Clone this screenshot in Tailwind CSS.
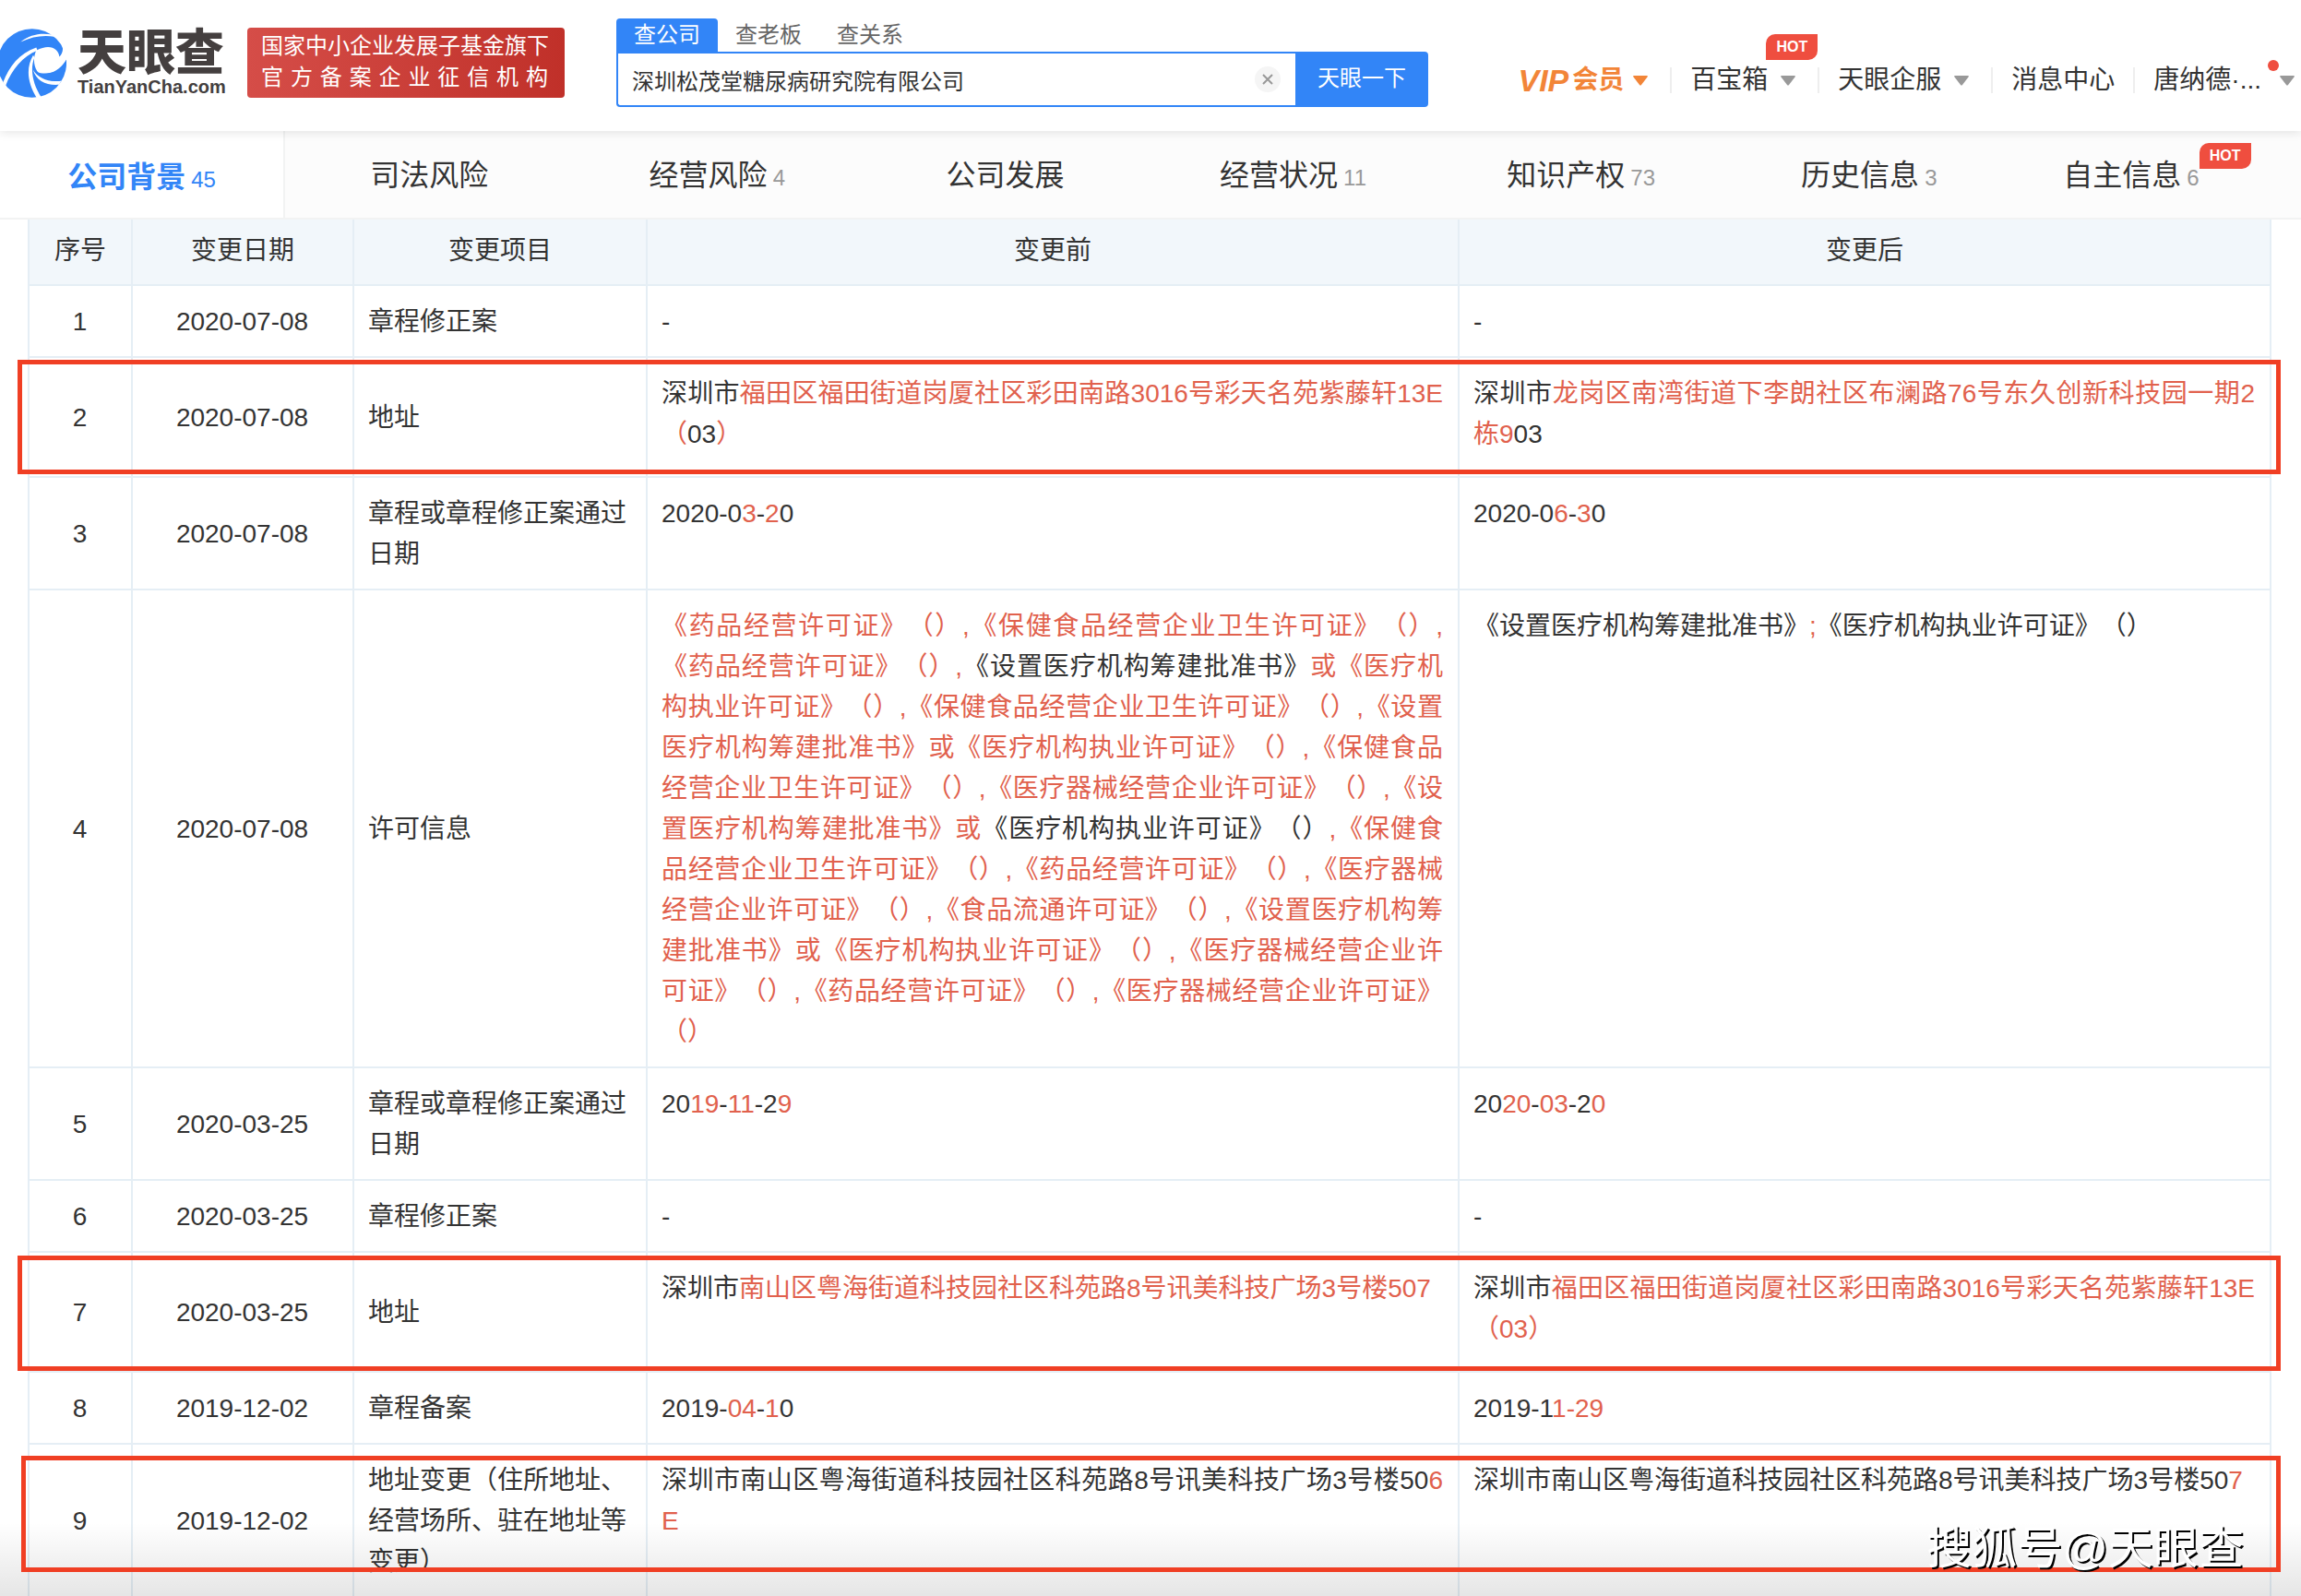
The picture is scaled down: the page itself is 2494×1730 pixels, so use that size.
<!DOCTYPE html>
<html lang="zh-CN">
<head>
<meta charset="utf-8">
<meta name="viewport" content="width=device-width, initial-scale=1">
<title>天眼查 - 变更记录</title>
<script src="https://cdn.jsdelivr.net/npm/@tailwindcss/browser@4"></script>
</head>
<body class="relative flex h-screen flex-col overflow-hidden bg-white font-['Liberation_Sans','Noto_Sans_CJK_SC',sans-serif] text-[28px] leading-[44px] text-[#333] [text-spacing-trim:space-all]">

<header class="relative z-20 flex shrink-0 items-center bg-white pt-5 pb-[26px] whitespace-nowrap shadow-[0_2px_10px_rgba(0,0,0,0.1)]">
  <a href="#" class="flex items-center gap-3" aria-label="天眼查">
    <svg class="h-[75px] w-[72px]" viewBox="0 32 216 224" aria-hidden="true">
      <circle cx="104" cy="144" r="112" fill="#3285f7"/>
      <g fill="#fff">
        <path d="M67 75C98 51 130 45 170 51L176 58C140 52 105 58 67 75Z"/>
        <path d="M118 103C160 80 190 95 193 123C205 112 207 95 200 80L228 90L217 130C205 150 185 175 150 177C135 177 125 176 121 170C108 152 108 122 118 103Z"/>
        <path d="M107 165C125 195 160 207 200 201L192 214C150 217 118 202 107 165Z"/>
        <path d="M10 206C30 155 62 112 118 93L122 103C75 120 38 165 18 218Z"/>
        <path d="M112 125C96 165 108 215 134 254L121 260C88 205 84 160 108 118Z"/>
      </g>
      <path d="M126 177C165 185 205 165 217 130C217 160 208 185 196 202C165 205 142 195 126 177Z" fill="#3285f7"/>
    </svg>
    <span class="flex w-40 flex-col text-[#443f3f]">
      <span class="text-[53px] leading-[52px] font-black">天眼查</span>
      <span class="text-[20px] leading-5 font-bold">TianYanCha.com</span>
    </span>
  </a>
  <p class="ml-6 w-[344px] rounded-sm bg-linear-to-r from-[#d54d48] to-[#c03029] pt-[3px] pr-[18px] pb-[5px] pl-[15px] text-justify text-[24px] leading-[34px] text-white [text-align-last:justify]">国家中小企业发展子基金旗下<br>官方备案企业征信机构</p>

  <form class="ml-14 w-[880px]" onsubmit="return false">
    <div class="flex text-center text-[24px] leading-9 text-[#666]">
      <button type="button" class="w-[110px] rounded-t-sm bg-[#3285f7] text-white">查公司</button>
      <button type="button" class="w-[110px]">查老板</button>
      <button type="button" class="w-[110px]">查关系</button>
    </div>
    <div class="flex h-[60px]">
      <div class="flex flex-1 items-center rounded-bl-sm border-2 border-r-0 border-[#3285f7] pr-4 pl-[15px]">
        <input type="text" aria-label="公司名称" value="深圳松茂堂糖尿病研究院有限公司" class="h-full min-w-0 flex-1 text-[24px] outline-none">
        <button type="button" aria-label="清除" class="flex size-7 items-center justify-center rounded-full bg-[#f5f5f5]">
          <svg class="size-3" viewBox="0 0 12 12" fill="none" stroke="#999" stroke-width="2" aria-hidden="true"><path d="M1 1L11 11M11 1L1 11"/></svg>
        </button>
      </div>
      <button type="submit" class="w-36 rounded-r-sm bg-[#3285f7] pb-0.5 text-[24px] text-white">天眼一下</button>
    </div>
  </form>

  <nav class="ml-auto flex h-[60px] items-center self-end pt-0.5 pr-[7px]" aria-label="用户菜单">
    <a href="#" class="flex items-center border-r-2 border-[#eee] pr-6 leading-7 font-bold text-[#f28538]">
      <span class="mr-1 text-[34px] italic">VIP</span>会员
      <svg class="ml-2.5 h-[11px] w-4" viewBox="0 0 16 11" fill="currentColor" aria-hidden="true"><path d="M1 0H15Q16.500 0 15.500 1.500L9 10Q8 11 7 10L.5 1.500Q-.5 0 1 0Z"/></svg>
    </a>
    <a href="#" class="relative flex items-center border-r-2 border-[#eee] pr-6 pl-5 leading-7">百宝箱
      <svg class="ml-3.5 h-[11px] w-4 text-[#999]" viewBox="0 0 16 11" fill="currentColor" aria-hidden="true"><path d="M1 0H15Q16.500 0 15.500 1.500L9 10Q8 11 7 10L.5 1.500Q-.5 0 1 0Z"/></svg>
      <span class="absolute right-0 bottom-full mb-2 h-7 w-14 rounded-tl-[10px] rounded-br-[10px] bg-[#ef4e3f] text-center text-base leading-7 font-bold text-white">HOT</span>
    </a>
    <a href="#" class="flex items-center border-r-2 border-[#eee] pr-6 pl-5 leading-7">天眼企服
      <svg class="ml-3.5 h-[11px] w-4 text-[#999]" viewBox="0 0 16 11" fill="currentColor" aria-hidden="true"><path d="M1 0H15Q16.500 0 15.500 1.500L9 10Q8 11 7 10L.5 1.500Q-.5 0 1 0Z"/></svg>
    </a>
    <a href="#" class="border-r-2 border-[#eee] px-5 leading-7">消息中心</a>
    <a href="#" class="relative flex items-center pl-5 leading-7">唐纳德·...
      <svg class="ml-5 h-[11px] w-4 text-[#999]" viewBox="0 0 16 11" fill="currentColor" aria-hidden="true"><path d="M1 0H15Q16.500 0 15.500 1.500L9 10Q8 11 7 10L.5 1.500Q-.5 0 1 0Z"/></svg>
      <span class="absolute -top-2 right-[17px] size-3 rounded-full bg-[#ef4e3f]"></span>
    </a>
  </nav>
</header>

<nav class="relative z-10 grid shrink-0 grid-cols-[309fr_repeat(7,312fr)] border-b-2 border-[#f2f3f3] bg-[#fcfcfc] text-[32px] whitespace-nowrap" aria-label="公司信息">
  <a href="#" class="flex h-[94px] items-baseline justify-center gap-1.5 border-r-2 border-[#f2f3f3] bg-white pt-7 font-bold text-[#3285f7]">公司背景<span class="text-[24px] font-normal">45</span></a>
  <a href="#" class="flex items-baseline justify-center gap-1.5 pt-[26px]">司法风险</a>
  <a href="#" class="flex items-baseline justify-center gap-1.5 pt-[26px]">经营风险<span class="text-[24px] text-[#999]">4</span></a>
  <a href="#" class="flex items-baseline justify-center gap-1.5 pt-[26px]">公司发展</a>
  <a href="#" class="flex items-baseline justify-center gap-1.5 pt-[26px]">经营状况<span class="text-[24px] text-[#999]">11</span></a>
  <a href="#" class="flex items-baseline justify-center gap-1.5 pt-[26px]">知识产权<span class="text-[24px] text-[#999]">73</span></a>
  <a href="#" class="flex items-baseline justify-center gap-1.5 pt-[26px]">历史信息<span class="text-[24px] text-[#999]">3</span></a>
  <a href="#" class="flex items-baseline justify-center gap-1.5 pt-[26px] pr-14">自主信息<span class="relative text-[24px] text-[#999]">6<span class="absolute bottom-full left-full -mb-3 h-7 w-14 rounded-tl-[10px] rounded-br-[10px] bg-[#ef4e3f] text-center text-base leading-7 font-bold text-white">HOT</span></span></a>
</nav>

<main class="min-h-0 flex-1 overflow-x-hidden overflow-y-auto pr-8 pl-[30px] [scrollbar-width:none]">
  <table class="w-full table-fixed border-collapse [&_em]:text-[#e1614d] [&_em]:not-italic [&_td]:border-2 [&_td]:border-[#e5eef5] [&_td]:pt-[17px] [&_td]:pr-4 [&_td]:pb-[15px] [&_td]:pl-[15px] [&_th]:border-2 [&_th]:border-t-0 [&_th]:border-[#e5eef5] [&_th]:bg-[#f2f7fb] [&_th]:pt-3 [&_th]:pb-3.5 [&_th]:font-normal">
    <colgroup><col class="w-[112px]"><col class="w-[240px]"><col class="w-[318px]"><col><col></colgroup>
    <thead>
      <tr><th scope="col">序号</th><th scope="col">变更日期</th><th scope="col">变更项目</th><th scope="col">变更前</th><th scope="col">变更后</th></tr>
    </thead>
    <tbody>
      <tr>
        <td class="text-center">1</td><td class="text-center">2020-07-08</td><td>章程修正案</td>
        <td class="align-top">-</td><td class="align-top">-</td>
      </tr>
      <tr class="relative h-[130px]">
        <td class="text-center">2<span class="pointer-events-none absolute top-[3px] -right-[11px] bottom-[3px] -left-3 z-10 border-5 border-[#f03f24]"></span></td><td class="text-center">2020-07-08</td><td>地址</td>
        <td class="text-justify align-top">深圳市<em>福田区福田街道岗厦社区彩田南路3016号彩天名苑紫藤轩13E（</em>03<em>）</em></td>
        <td class="text-justify align-top">深圳市<em>龙岗区南湾街道下李朗社区布澜路76号东久创新科技园一期2栋9</em>03</td>
      </tr>
      <tr>
        <td class="text-center">3</td><td class="text-center">2020-07-08</td><td>章程或章程修正案通过日期</td>
        <td class="align-top">2020-0<em>3</em>-<em>2</em>0</td><td class="align-top">2020-0<em>6</em>-<em>3</em>0</td>
      </tr>
      <tr>
        <td class="text-center">4</td><td class="text-center">2020-07-08</td><td>许可信息</td>
        <td class="text-justify align-top"><em>《药品经营许可证》（）,《保健食品经营企业卫生许可证》（）,《药品经营许可证》（）,</em>《设置医疗机构筹建批准书》<em>或《医疗机构执业许可证》（）,《保健食品经营企业卫生许可证》（）,《设置医疗机构筹建批准书》或《医疗机构执业许可证》（）,《保健食品经营企业卫生许可证》（）,《医疗器械经营企业许可证》（）,《设置医疗机构筹建批准书》或</em>《医疗机构执业许可证》（）<em>,《保健食品经营企业卫生许可证》（）,《药品经营许可证》（）,《医疗器械经营企业许可证》（）,《食品流通许可证》（）,《设置医疗机构筹建批准书》或《医疗机构执业许可证》（）,《医疗器械经营企业许可证》（）,《药品经营许可证》（）,《医疗器械经营企业许可证》（）</em></td>
        <td class="align-top">《设置医疗机构筹建批准书》<em>;</em>《医疗机构执业许可证》（）</td>
      </tr>
      <tr>
        <td class="text-center">5</td><td class="text-center">2020-03-25</td><td>章程或章程修正案通过日期</td>
        <td class="align-top">20<em>19</em>-<em>11</em>-2<em>9</em></td><td class="align-top">20<em>20</em>-<em>03</em>-2<em>0</em></td>
      </tr>
      <tr>
        <td class="text-center">6</td><td class="text-center">2020-03-25</td><td>章程修正案</td>
        <td class="align-top">-</td><td class="align-top">-</td>
      </tr>
      <tr class="relative h-[130px]">
        <td class="text-center">7<span class="pointer-events-none absolute top-1 -right-[11px] bottom-px -left-3 z-10 border-5 border-[#f03f24]"></span></td><td class="text-center">2020-03-25</td><td>地址</td>
        <td class="text-justify align-top">深圳市<em>南山区粤海街道科技园社区科苑路8号讯美科技广场3号楼507</em></td>
        <td class="text-justify align-top">深圳市<em>福田区福田街道岗厦社区彩田南路3016号彩天名苑紫藤轩13E（03）</em></td>
      </tr>
      <tr>
        <td class="text-center">8</td><td class="text-center">2019-12-02</td><td>章程备案</td>
        <td class="align-top">2019-<em>04</em>-<em>1</em>0</td><td class="align-top">2019-1<em>1-29</em></td>
      </tr>
      <tr class="relative">
        <td class="text-center">9<span class="pointer-events-none absolute top-[13px] -right-[11px] bottom-[27px] -left-2 z-10 border-5 border-[#f03f24]"></span></td><td class="text-center">2019-12-02</td><td>地址变更（住所地址、经营场所、驻在地址等变更）</td>
        <td class="text-justify align-top">深圳市南山区粤海街道科技园社区科苑路8号讯美科技广场3号楼50<em>6<wbr>E</em></td>
        <td class="text-justify align-top">深圳市南山区粤海街道科技园社区科苑路8号讯美科技广场3号楼50<em>7</em></td>
      </tr>
    </tbody>
  </table>
</main>

<div class="pointer-events-none absolute inset-x-0 bottom-0 h-20 bg-linear-to-b from-black/0 to-black/10"></div>
<p class="pointer-events-none absolute right-[62px] bottom-6 z-20 text-[49px] leading-[56px] text-white [text-shadow:2px_2px_0_#000]">搜狐号@天眼查</p>

</body>
</html>
